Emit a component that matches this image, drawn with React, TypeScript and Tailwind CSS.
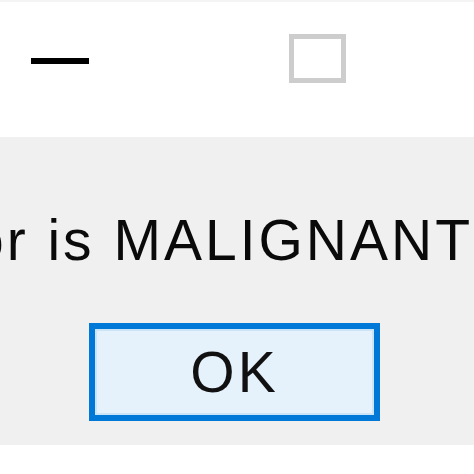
export default function App() {
  return (
    <div
      className="w-[474px] h-[474px] bg-white flex flex-col overflow-hidden"
      style={{ fontFamily: '"Liberation Sans", Arial, sans-serif' }}
    >
      <div className="h-[2px] bg-[#f4f4f4]" />
      <div className="h-[135px] flex items-start pl-[31px]">
        <div className="mt-[56px] w-[58px] h-[6px] bg-black" />
        <div className="ml-[200px] mt-[32px] w-[57px] h-[49px] border-[5px] border-[#cdcdcd]" />
      </div>
      <div className="h-[308px] bg-[#f0f0f0] flex flex-col">
        <div className="mt-[75px] h-[57px] flex justify-end overflow-hidden whitespace-nowrap pr-[1px]">
          <span className="text-[57px] leading-none text-[#0a0a0a] tracking-[3px]">The tumor is MALIGNANT</span>
        </div>
        <div className="mt-[54px] pl-[89px]">
          <div className="w-[291px] h-[98px] border-[6px] border-[#0078d7] bg-[#e5f1fb] shadow-[inset_0_0_0_2px_#cce4f7] flex items-center justify-center pt-[12px] pb-[12px]">
            <span className="text-[57px] leading-none text-[#111] tracking-[3px]">OK</span>
          </div>
        </div>
      </div>
      <div className="flex-1 bg-white" />
    </div>
  );
}
